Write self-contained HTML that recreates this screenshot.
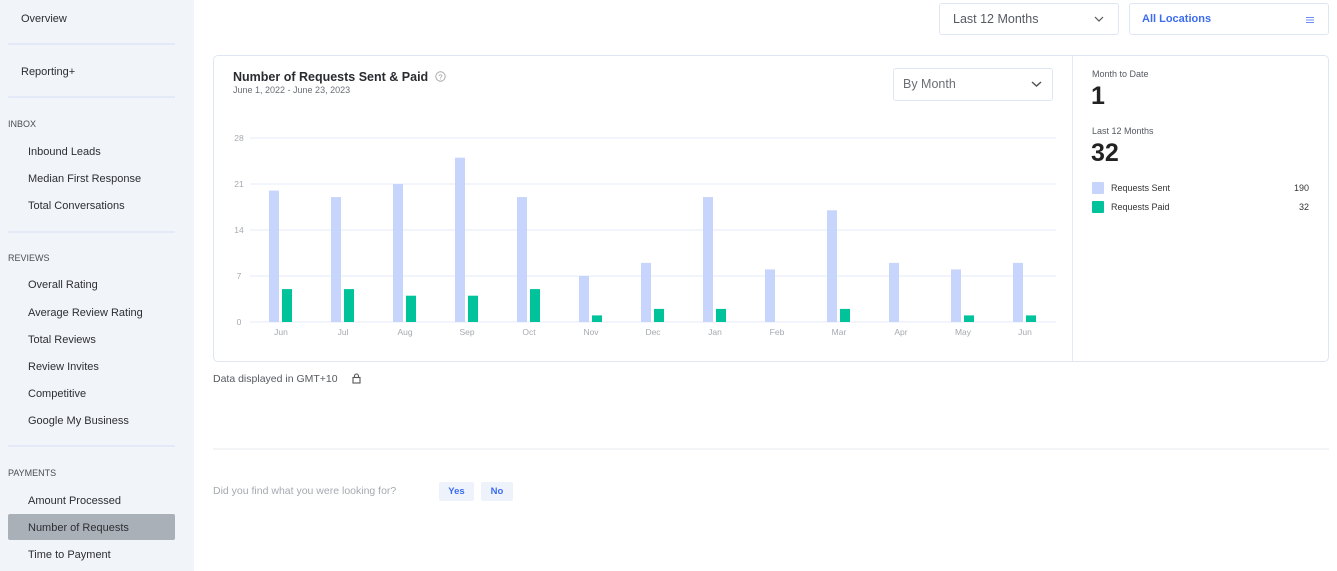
<!DOCTYPE html>
<html><head><meta charset="utf-8"><style>
*{margin:0;padding:0;box-sizing:border-box}
body{width:1337px;height:571px;overflow:hidden;background:#fff;font-family:"Liberation Sans",sans-serif;position:relative;color:#2d2e33}
.side{position:absolute;left:0;top:0;width:194px;height:571px;background:#f1f4f8}
.side div{position:absolute;font-size:11px;color:#2d2e33}
.hr{position:absolute;left:8px;width:167px;height:2px;background:#e3e9f6}
.h{font-size:9px!important;color:#4a4d55!important;left:8px}
.abs{position:absolute}
.box{position:absolute;border:1px solid #dfe6f3;border-radius:3px;background:#fff}
</style></head><body>
<div class="side">
<div style="left:21px;top:13px">Overview</div>
<div class="hr" style="top:43px"></div>
<div style="left:21px;top:66px">Reporting+</div>
<div class="hr" style="top:96px"></div>
<div class="h" style="top:119px">INBOX</div>
<div style="left:28px;top:146px">Inbound Leads</div>
<div style="left:28px;top:173px">Median First Response</div>
<div style="left:28px;top:200px">Total Conversations</div>
<div class="hr" style="top:231px"></div>
<div class="h" style="top:253px">REVIEWS</div>
<div style="left:28px;top:279px">Overall Rating</div>
<div style="left:28px;top:307px">Average Review Rating</div>
<div style="left:28px;top:334px">Total Reviews</div>
<div style="left:28px;top:361px">Review Invites</div>
<div style="left:28px;top:388px">Competitive</div>
<div style="left:28px;top:415px">Google My Business</div>
<div class="hr" style="top:445px"></div>
<div class="h" style="top:468px">PAYMENTS</div>
<div style="left:28px;top:495px">Amount Processed</div>
<div style="left:8px;top:514px;width:167px;height:26px;background:#a9b0b8;border-radius:2px"></div>
<div style="left:28px;top:522px">Number of Requests</div>
<div style="left:28px;top:549px">Time to Payment</div>
</div>

<div class="box" style="left:939px;top:3px;width:180px;height:32px"></div>
<div class="abs" style="left:953px;top:12px;font-size:12.5px;color:#555a62">Last 12 Months</div>
<svg class="abs" style="left:1094px;top:15px" width="10" height="8"><path d="M1 2l4 4 4-4" fill="none" stroke="#555" stroke-width="1.2"/></svg>
<div class="box" style="left:1129px;top:3px;width:200px;height:32px"></div>
<div class="abs" style="left:1142px;top:13px;font-size:11px;font-weight:bold;color:#3d6cf0">All Locations</div>
<svg class="abs" style="left:1305px;top:16px" width="10" height="8"><path d="M1 1.5h8M1 4h8M1 6.5h8" stroke="#6b8df0" stroke-width="1"/></svg>

<div class="box" style="left:213px;top:55px;width:1116px;height:307px;border-radius:5px"></div>
<div class="abs" style="left:1072px;top:56px;width:1px;height:305px;background:#e3e9f6"></div>
<div class="abs" style="left:233px;top:70px;font-size:12.5px;font-weight:bold;color:#2a2b30">Number of Requests Sent &amp; Paid</div>
<svg class="abs" style="left:435px;top:71px" width="11" height="11"><circle cx="5.5" cy="5.5" r="4.7" fill="none" stroke="#aaa"/><text x="5.5" y="8.3" font-size="7.5" text-anchor="middle" fill="#999" font-family="Liberation Sans">?</text></svg>
<div class="abs" style="left:233px;top:85px;font-size:9px;color:#6a6e76">June 1, 2022 - June 23, 2023</div>
<div class="box" style="left:893px;top:68px;width:160px;height:33px"></div>
<div class="abs" style="left:903px;top:77px;font-size:12.5px;color:#6a6e76">By Month</div>
<svg class="abs" style="left:1031px;top:80px" width="11" height="8"><path d="M1 2l4.5 4 4.5-4" fill="none" stroke="#555" stroke-width="1.5"/></svg>

<svg class="abs" style="left:0;top:0" width="1337" height="571">
<g stroke="#eef2fb" stroke-width="1.5"><line x1="250" y1="138" x2="1056" y2="138"/><line x1="250" y1="184" x2="1056" y2="184"/><line x1="250" y1="230" x2="1056" y2="230"/><line x1="250" y1="276" x2="1056" y2="276"/><line x1="250" y1="322" x2="1056" y2="322"/></g>
<g font-family="Liberation Sans" font-size="8.5" fill="#a5a9b0" text-anchor="middle"><text x="239" y="141">28</text><text x="239" y="187">21</text><text x="239" y="233">14</text><text x="239" y="279">7</text><text x="239" y="325">0</text>
<text x="281" y="335">Jun</text><text x="343" y="335">Jul</text><text x="405" y="335">Aug</text><text x="467" y="335">Sep</text><text x="529" y="335">Oct</text><text x="591" y="335">Nov</text><text x="653" y="335">Dec</text><text x="715" y="335">Jan</text><text x="777" y="335">Feb</text><text x="839" y="335">Mar</text><text x="901" y="335">Apr</text><text x="963" y="335">May</text><text x="1025" y="335">Jun</text></g>
<g fill="#c7d4fb">
<rect x="269" y="190.6" width="10" height="131.4"/><rect x="331" y="197.1" width="10" height="124.9"/><rect x="393" y="184" width="10" height="138"/><rect x="455" y="157.7" width="10" height="164.3"/><rect x="517" y="197.1" width="10" height="124.9"/><rect x="579" y="276" width="10" height="46"/><rect x="641" y="262.9" width="10" height="59.1"/><rect x="703" y="197.1" width="10" height="124.9"/><rect x="765" y="269.4" width="10" height="52.6"/><rect x="827" y="210.3" width="10" height="111.7"/><rect x="889" y="262.9" width="10" height="59.1"/><rect x="951" y="269.4" width="10" height="52.6"/><rect x="1013" y="262.9" width="10" height="59.1"/></g>
<g fill="#00c39c">
<rect x="282" y="289.1" width="10" height="32.9"/><rect x="344" y="289.1" width="10" height="32.9"/><rect x="406" y="295.7" width="10" height="26.3"/><rect x="468" y="295.7" width="10" height="26.3"/><rect x="530" y="289.1" width="10" height="32.9"/><rect x="592" y="315.4" width="10" height="6.6"/><rect x="654" y="308.9" width="10" height="13.1"/><rect x="716" y="308.9" width="10" height="13.1"/><rect x="840" y="308.9" width="10" height="13.1"/><rect x="964" y="315.4" width="10" height="6.6"/><rect x="1026" y="315.4" width="10" height="6.6"/></g>
<rect x="1092" y="182" width="12" height="12" fill="#c7d4fb" rx="1"/><rect x="1092" y="201" width="12" height="12" fill="#00c39c" rx="1"/>
<line x1="213" y1="449" x2="1329" y2="449" stroke="#e6e8ec"/>
</svg>
<div class="abs" style="left:1092px;top:69px;font-size:9px;color:#555a62">Month to Date</div>
<div class="abs" style="left:1091px;top:82px;font-size:25px;font-weight:bold;color:#222">1</div>
<div class="abs" style="left:1092px;top:126px;font-size:9px;color:#555a62">Last 12 Months</div>
<div class="abs" style="left:1091px;top:139px;font-size:25px;font-weight:bold;color:#222">32</div>
<div class="abs" style="left:1111px;top:183px;font-size:9px;color:#333">Requests Sent</div>
<div class="abs" style="left:1111px;top:202px;font-size:9px;color:#333">Requests Paid</div>
<div class="abs" style="left:1280px;top:183px;width:29px;text-align:right;font-size:9px;color:#333">190</div>
<div class="abs" style="left:1280px;top:202px;width:29px;text-align:right;font-size:9px;color:#333">32</div>
<div class="abs" style="left:213px;top:373px;font-size:10.5px;color:#555a62">Data displayed in GMT+10</div>
<svg class="abs" style="left:352px;top:373px" width="9" height="11"><rect x="1" y="4.5" width="7" height="5.5" fill="none" stroke="#555" stroke-width="1.1"/><path d="M2.5 4.5V3a2 2 0 0 1 4 0v1.5" fill="none" stroke="#555" stroke-width="1.1"/></svg>
<div class="abs" style="left:213px;top:485px;font-size:10.5px;color:#a5a9b0">Did you find what you were looking for?</div>
<div class="abs" style="left:439px;top:482px;width:35px;height:19px;background:#eef2fb;border-radius:2px;font-size:9.5px;font-weight:bold;color:#3d6cf0;text-align:center;line-height:19px">Yes</div>
<div class="abs" style="left:481px;top:482px;width:32px;height:19px;background:#eef2fb;border-radius:2px;font-size:9.5px;font-weight:bold;color:#3d6cf0;text-align:center;line-height:19px">No</div>
</body></html>
